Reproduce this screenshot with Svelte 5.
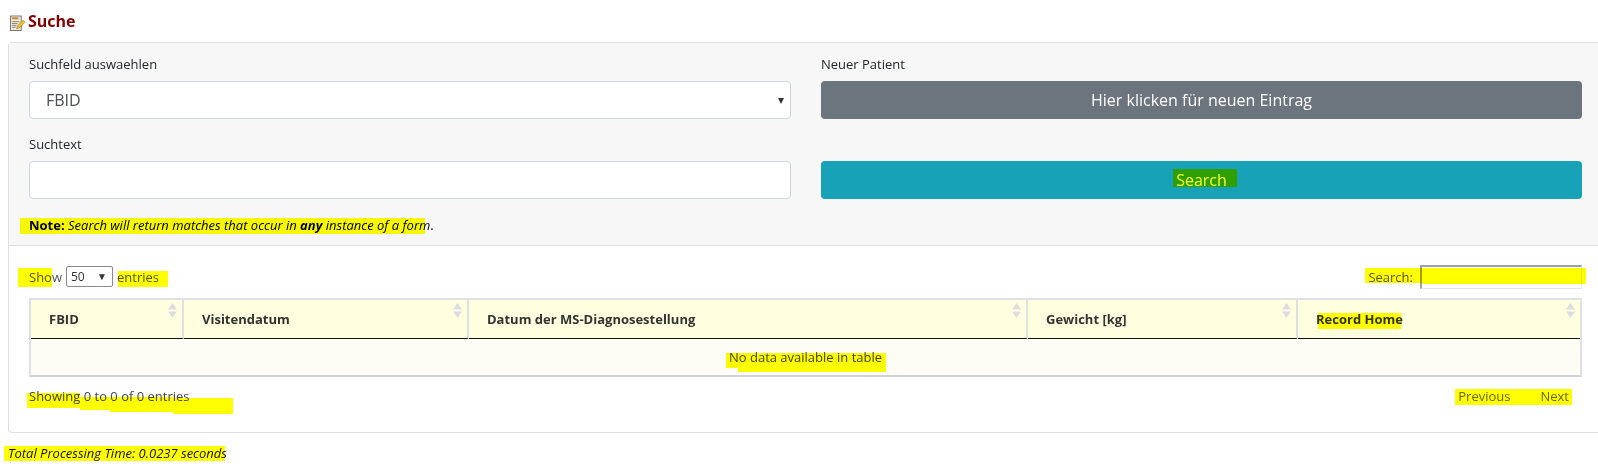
<script>
  const columns = ['FBID', 'Visitendatum', 'Datum der MS-Diagnosestellung', 'Gewicht [kg]', 'Record Home'];
  const widths = [153, 285, 559, 270, 282];
  const marks = [
    [20, 218, 405, 16], [18, 268, 34, 19], [118, 271, 50, 16],
    [1365, 268, 57, 15], [1422, 268, 164, 16], [1318, 313, 83, 16], [726, 353, 160, 15], [738, 367, 148, 5],
    [27, 393, 53, 15], [80, 397, 30, 13], [110, 397, 63, 15], [173, 398, 60, 16],
    [1455, 389, 117, 16], [4, 446, 221, 15]
  ];
</script>

<div class="page">
  <h1 class="title">
    <svg class="note-icon" viewBox="0 0 16 17" width="16" height="17" aria-hidden="true">
      <rect x="0.5" y="0.5" width="11.5" height="15.5" fill="#efe9dc" stroke="#77716a"/>
      <rect x="2" y="2" width="7" height="2" fill="#c98a2b"/>
      <path d="M2 6.5h8M2 8.5h6M2 10.5h5M2 12.5h4" stroke="#8a8377" stroke-width="1"/>
      <path d="M7 14l1-3 6-6 2 2-6 6z" fill="#f2c230" stroke="#a5761a" stroke-width="0.7"/>
    </svg>
    Suche
  </h1>

  <section class="card">
    <div class="card-head">
      <div class="form-grid">
        <div class="field">
          <span class="label">Suchfeld auswaehlen</span>
          <div class="control select-control">FBID<span class="caret">▾</span></div>
        </div>
        <div class="field">
          <span class="label">Neuer Patient</span>
          <button class="btn gray" type="button">Hier klicken für neuen Eintrag</button>
        </div>
        <div class="field">
          <span class="label">Suchtext</span>
          <div class="control"></div>
        </div>
        <div class="field">
          <span class="label">&nbsp;</span>
          <button class="btn teal" type="button"><span class="green"></span><span class="search-text">Search</span></button>
        </div>
      </div>
      <p class="note"><b>Note:</b> <i>Search will return matches that occur in <b>any</b> instance of a form</i>.</p>
    </div>

    <div class="card-body">
      <div class="tools">
        <div class="length">Show <span class="mini-select">50<span class="mini-caret">▼</span></span> entries</div>
        <div class="filter">Search: <span class="filter-input"></span></div>
      </div>

      <table>
        <colgroup>
          {#each widths as w}<col style="width:{w}px" />{/each}
        </colgroup>
        <thead>
          <tr>
            {#each columns as c}
              <th>{c}
                <svg class="sort" viewBox="0 0 9 15" width="9" height="15" aria-hidden="true">
                  <path d="M4.5 0l4.5 6.5H0zM4.5 15L9 8.5H0z" fill="#dcdce2"/>
                </svg>
              </th>
            {/each}
          </tr>
        </thead>
        <tbody>
          <tr><td colspan="5">No data available in table</td></tr>
        </tbody>
      </table>

      <div class="foot">
        <span>Showing 0 to 0 of 0 entries</span>
        <span class="pager"><span>Previous</span><span>Next</span></span>
      </div>
    </div>
  </section>

  <p class="time"><i>Total Processing Time: 0.0237 seconds</i></p>

  {#each marks as m}
    <span class="mark" style="left:{m[0]}px;top:{m[1]}px;width:{m[2]}px;height:{m[3]}px"></span>
  {/each}
</div>

<style>
  :global(body) { margin: 0; background: #fff; }
  .page {
    position: relative;
    height: 469px;
    overflow: hidden;
    font-family: "Open Sans", sans-serif;
    font-size: 13px;
    color: #212529;
    box-sizing: border-box;
    padding-top: 10px;
  }
  .title {
    display: flex;
    align-items: center;
    gap: 3px;
    margin: 0 0 0 10px;
    height: 21px;
    font-size: 16px;
    font-weight: 700;
    color: #800000;
  }
  .note-icon { margin-top: 5px; flex: none; width: 15px; }
  .card {
    margin: 11px 0 0 8px;
    border: 1px solid #dfdfdf;
    border-right: 0;
    border-radius: 4px 0 0 4px;
    height: 391px;
    box-sizing: border-box;
  }
  .card-head {
    background: #f7f7f7;
    border-bottom: 1px solid #dfdfdf;
    padding: 12px 16px 0 20px;
    height: 203px;
    box-sizing: border-box;
  }
  .form-grid {
    display: grid;
    grid-template-columns: 762px 761px;
    column-gap: 30px;
    row-gap: 16px;
  }
  .field { display: flex; flex-direction: column; gap: 8px; }
  .label { line-height: 18px; height: 18px; color: #212529; }
  .control {
    height: 38px;
    box-sizing: border-box;
    background: #fff;
    border: 1px solid #ced4da;
    border-radius: 4px;
    position: relative;
  }
  .select-control {
    font-size: 16px;
    line-height: 36px;
    padding-left: 16px;
    color: #495057;
  }
  .caret {
    position: absolute;
    right: 6px;
    top: 0;
    font-size: 12px;
    color: #333;
  }
  .btn {
    height: 38px;
    border: 0;
    border-radius: 4px;
    color: #fff;
    font: 16px "Open Sans", sans-serif;
    position: relative;
    padding: 0;
  }
  .gray { background: #6c757d; }
  .teal { background: #17a2b8; }
  .green {
    position: absolute;
    left: 352px;
    top: 8px;
    width: 64px;
    height: 18px;
    background: #2f9f00;
  }
  .search-text { position: relative; color: #f4ff30; }
  .note { margin: 17px 0 0; font-size: 13px; line-height: 18px; color: #000; }
  .card-body { padding: 0 16px 0 20px; }
  .tools {
    display: flex;
    justify-content: space-between;
    align-items: center;
    padding-top: 20px;
    height: 21px;
    color: #555;
  }
  .length { display: flex; align-items: center; gap: 4px; }
  .mini-select {
    width: 47px;
    height: 21px;
    box-sizing: border-box;
    border: 1px solid #8a8a8a;
    border-radius: 2px;
    padding-left: 4px;
    line-height: 19px;
    position: relative;
    font-size: 12px;
    background: #fff;
    color: #333;
  }
  .mini-caret { position: absolute; right: 5px; top: 0; font-size: 10px; }
  .filter { display: flex; align-items: center; gap: 7px; }
  .filter-input {
    width: 162px;
    height: 24px;
    box-sizing: border-box;
    border: 1px solid #e6e6e6;
    border-top: 2px solid #a0a0a0;
    border-left: 2px solid #a0a0a0;
  }
  table {
    width: 1553px;
    box-sizing: border-box;
    table-layout: fixed;
    border-collapse: separate;
    border-spacing: 0;
    margin-top: 11px;
    border: 2px solid #dee2e6;
    border-bottom-color: #cfd2d6;
  }
  th {
    position: relative;
    height: 39px;
    background: #ffffe0;
    border-bottom: 1px solid #111;
    border-right: 2px solid #dee2e6;
    padding: 0 0 0 18px;
    text-align: left;
    font-size: 13px;
    font-weight: 700;
    color: #333;
    box-sizing: border-box;
  }
  th:last-child { border-right: 0; }
  .sort { position: absolute; right: 5px; top: 3px; }
  td {
    height: 36px;
    background: #fdfdf5;
    text-align: center;
    color: #444;
    padding: 0;
  }
  .foot {
    display: flex;
    justify-content: space-between;
    margin-top: 10px;
    line-height: 18px;
    color: #444;
  }
  .pager { display: flex; gap: 30px; padding-right: 13px; color: #666; }
  .time { margin: 11px 0 0 8px; font-size: 13px; line-height: 18px; color: #111; }
  .mark {
    position: absolute;
    background: #ffff00;
    mix-blend-mode: multiply;
  }
</style>
